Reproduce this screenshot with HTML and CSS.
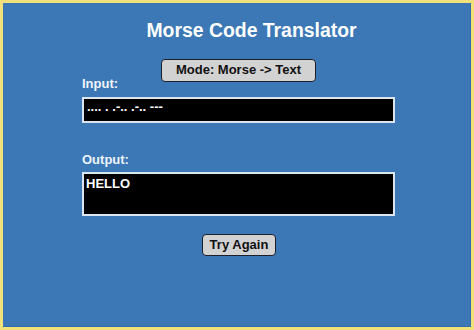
FILE: index.html
```html
<!DOCTYPE html>
<html lang="en">

<head>
    <meta charset="UTF-8">
    <meta name="viewport" content="width=device-width, initial-scale=1.0">
    <title>Morse Code Translator</title>
    <link rel="stylesheet" href="styles.css">
</head>

<body>
    <div class="frame">
        <h1>Morse Code Translator</h1>
        <main class="translator">
            <button class="btn mode-btn">Mode: Morse -&gt; Text</button>
            <label class="field-label">Input:</label>
            <div class="box input-box">.... . .-.. .-.. ---</div>
            <label class="field-label output-label">Output:</label>
            <div class="box output-box">HELLO</div>
            <button class="btn retry-btn">Try Again</button>
        </main>
    </div>
</body>

</html>
```

FILE: styles.css
```css
html,
body {
    margin: 0;
    padding: 0;
}

body {
    font-family: "Liberation Sans", Arial, sans-serif;
    font-weight: bold;
    background-color: #f2e07a;
}

.frame {
    box-sizing: border-box;
    width: 474px;
    height: 330px;
    border: 3px solid #f2e07a;
    background-color: #3b78b5;
    box-shadow: inset -1px -1px 0 #356da6;
    color: white;
}

h1 {
    margin: 0;
    padding: 16px 0 0 29px;
    font-size: 19.4px;
    line-height: 22px;
    text-align: center;
}

.translator {
    width: 313px;
    margin: 18px 0 0 79px;
    display: flex;
    flex-direction: column;
}

.btn {
    align-self: center;
    font-family: inherit;
    font-weight: bold;
    font-size: 13px;
    line-height: 15px;
    color: #111;
    background-color: #d2d2d2;
    border: 1px solid #1c1f2c;
    border-radius: 4px;
    cursor: pointer;
}

.mode-btn {
    padding: 2px 14px 4px;
}

.retry-btn {
    margin: 18px 0 0 1px;
    padding: 2px 7px 3px;
}

.field-label {
    font-size: 13px;
    line-height: 15px;
    margin-top: -6px;
    color: #eef3fa;
}

.output-label {
    margin-top: 29px;
}

.box {
    box-sizing: border-box;
    background-color: #000;
    border: 2px solid #dbe5ef;
    font-size: 13px;
    line-height: 15px;
    color: white;
}

.input-box {
    margin-top: 6px;
    height: 26px;
    padding: 0 3px;
}

.output-box {
    margin-top: 5px;
    height: 44px;
    padding: 2px 2px;
}
```
